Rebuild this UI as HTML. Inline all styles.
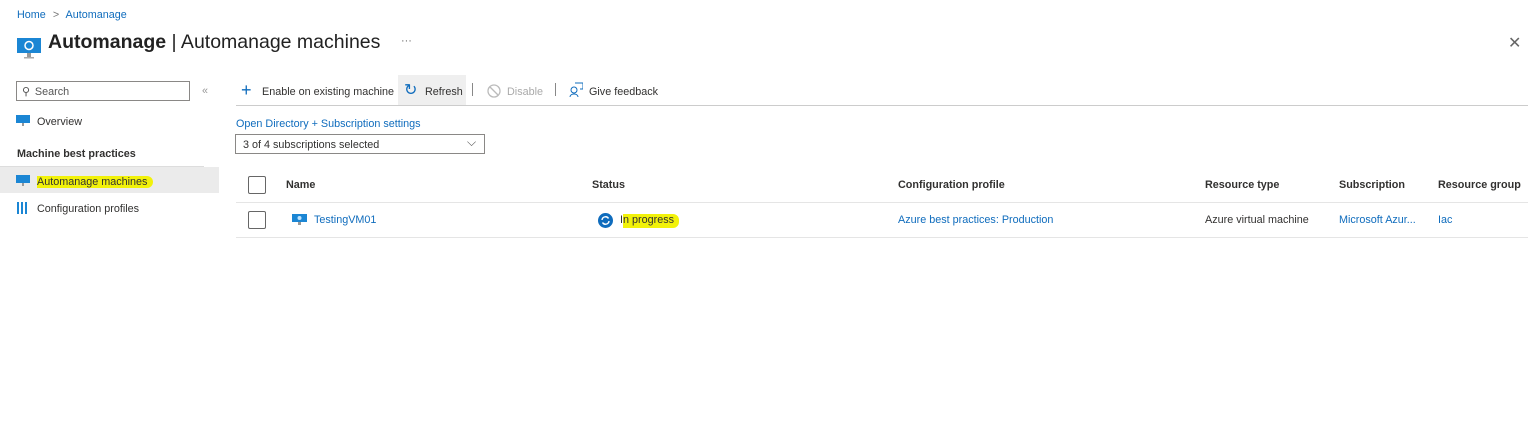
<!DOCTYPE html>
<html><head><style>
body{margin:0;width:1536px;height:434px;background:#fff;font-family:"Liberation Sans",sans-serif;font-size:10.8px;color:#323130;position:relative;overflow:hidden}
.a{position:absolute;white-space:nowrap}
.l{color:#0f6cbd}
.b{font-weight:bold}
.hl{background:#f2f20a}
</style></head><body>
<div class="a l" style="left:17px;top:9px">Home <span style="color:#777;margin:0 4px">&gt;</span> Automanage</div>
<svg class="a" style="left:17px;top:36px" width="24" height="23" viewBox="0 0 24 23"><rect x="0" y="2" width="24" height="15" fill="#1b86d4"/><circle cx="12" cy="9.5" r="4" fill="none" stroke="#fff" stroke-width="1.5"/><rect x="10" y="17" width="4" height="4" fill="#999"/><rect x="7" y="21" width="10" height="1.5" fill="#aaa"/></svg>
<div class="a" style="left:48px;top:31px;font-size:19.5px;color:#222"><b>Automanage</b> | Automanage machines</div>
<div class="a" style="left:401px;top:35px;color:#666">···</div>
<div class="a" style="left:1508px;top:33px;font-size:16px;color:#666">✕</div>

<div class="a" style="left:16px;top:81px;width:172px;height:18px;border:1px solid #8a8886"></div>
<div class="a" style="left:22px;top:85px;color:#555">⚲ <span style="margin-left:2px">Search</span></div>
<div class="a" style="left:202px;top:85px;color:#999">«</div>
<svg class="a" style="left:16px;top:114px" width="14" height="13"><rect x="0" y="1" width="14" height="8" fill="#1b86d4"/><rect x="6" y="9" width="2" height="3" fill="#999"/></svg>
<div class="a" style="left:37px;top:116px">Overview</div>
<div class="a b" style="left:17px;top:148px">Machine best practices</div>
<div class="a" style="left:0;top:166px;width:204px;height:1px;background:#ddd"></div>
<div class="a" style="left:0;top:167px;width:219px;height:26px;background:#ebebeb"></div>
<svg class="a" style="left:16px;top:174px" width="14" height="13"><rect x="0" y="1" width="14" height="8" fill="#1b86d4"/><rect x="6" y="9" width="2" height="3" fill="#999"/></svg>
<div class="a" style="left:37px;top:176px"><span class="hl" style="padding:0 6px 0 0;border-radius:0 6px 6px 0">Automanage machines</span></div>
<div class="a" style="left:17px;top:202px;width:10px;height:12px;background:repeating-linear-gradient(90deg,#1b86d4 0 2px,transparent 2px 4px)"></div>
<div class="a" style="left:37px;top:203px">Configuration profiles</div>

<div class="a" style="left:398px;top:75px;width:68px;height:30px;background:#efefef"></div>
<div class="a" style="left:241px;top:80px;font-size:18px;color:#0f6cbd;line-height:20px">+</div>
<div class="a" style="left:262px;top:86px">Enable on existing machine</div>
<div class="a" style="left:404px;top:81px;font-size:16px;color:#0f6cbd;line-height:20px">↻</div>
<div class="a" style="left:425px;top:86px">Refresh</div>
<div class="a" style="left:472px;top:83px;width:1px;height:13px;background:#888"></div>
<svg class="a" style="left:487px;top:84px" width="14" height="14"><circle cx="7" cy="7" r="6" fill="none" stroke="#bbb" stroke-width="1.3"/><path d="M3 3l8 8" stroke="#bbb" stroke-width="1.3"/></svg>
<div class="a" style="left:507px;top:86px;color:#aaa">Disable</div>
<div class="a" style="left:555px;top:83px;width:1px;height:13px;background:#888"></div>
<svg class="a" style="left:569px;top:82px" width="14" height="16"><circle cx="5" cy="8" r="3" fill="none" stroke="#0f6cbd"/><path d="M1 15c0-4 8-4 8 0M6 1h8v6h-3" fill="none" stroke="#0f6cbd"/></svg>
<div class="a" style="left:589px;top:86px">Give feedback</div>
<div class="a" style="left:236px;top:105px;width:1292px;height:1px;background:#ccc"></div>

<div class="a l" style="left:236px;top:118px">Open Directory + Subscription settings</div>
<div class="a" style="left:235px;top:134px;width:248px;height:18px;border:1px solid #8a8886"></div>
<div class="a" style="left:243px;top:139px">3 of 4 subscriptions selected</div>
<div class="a" style="left:467px;top:135px;color:#555;font-size:12px">⌵</div>

<div class="a" style="left:248px;top:176px;width:16px;height:16px;border:1px solid #666;border-radius:2px"></div>
<div class="a b" style="left:286px;top:179px">Name</div>
<div class="a b" style="left:592px;top:179px">Status</div>
<div class="a b" style="left:898px;top:179px">Configuration profile</div>
<div class="a b" style="left:1205px;top:179px">Resource type</div>
<div class="a b" style="left:1339px;top:179px">Subscription</div>
<div class="a b" style="left:1438px;top:179px">Resource group</div>
<div class="a" style="left:236px;top:202px;width:1292px;height:1px;background:#e5e5e5"></div>
<div class="a" style="left:248px;top:211px;width:16px;height:16px;border:1px solid #666;border-radius:2px"></div>
<svg class="a" style="left:292px;top:213px" width="15" height="14"><rect x="0" y="1" width="15" height="8" fill="#1b86d4"/><circle cx="7.5" cy="5" r="2" fill="#bfe4ff"/><rect x="6" y="9" width="3" height="3" fill="#999"/></svg>
<div class="a l" style="left:314px;top:214px">TestingVM01</div>
<svg class="a" style="left:598px;top:213px" width="15" height="15"><circle cx="7.5" cy="7.5" r="7.5" fill="#0f6cbd"/><path d="M4 7a3.5 3.5 0 0 1 6.5-1.5M11 8a3.5 3.5 0 0 1-6.5 1.5" fill="none" stroke="#fff" stroke-width="1.4"/></svg>
<div class="a" style="left:620px;top:214px">I<span class="hl" style="padding:0 5px 2px 0;border-radius:0 6px 6px 0">n progress</span></div>
<div class="a l" style="left:898px;top:214px">Azure best practices: Production</div>
<div class="a" style="left:1205px;top:214px">Azure virtual machine</div>
<div class="a l" style="left:1339px;top:214px">Microsoft Azur...</div>
<div class="a l" style="left:1438px;top:214px">Iac</div>
<div class="a" style="left:236px;top:237px;width:1292px;height:1px;background:#e5e5e5"></div>
</body></html>
